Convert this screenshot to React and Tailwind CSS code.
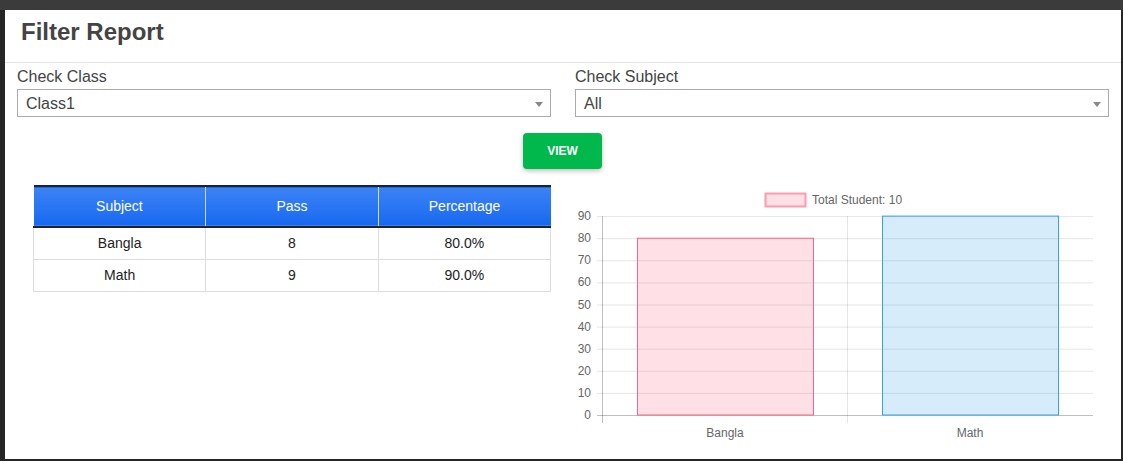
import React from 'react'

const rows = [
  { subject: 'Bangla', pass: 8, pct: '80.0%' },
  { subject: 'Math', pass: 9, pct: '90.0%' },
]

const ticks = [90, 80, 70, 60, 50, 40, 30, 20, 10, 0]
const yOf = v => 230 - v * 2.21

const Select = ({ value }) => (
  <div className="relative h-[28px] border border-[#aaa] bg-white flex items-center pl-[8px] pt-[1px]">
    <span className="text-[16px] text-[#444]">{value}</span>
    <span className="absolute right-[7px] top-[12px] w-0 h-0 border-l-[4px] border-r-[4px] border-t-[5px] border-l-transparent border-r-transparent border-t-[#888]" />
  </div>
)

const Chart = () => (
  <svg width="549" height="270" className="block" style={{ fontFamily: '"Liberation Sans", Arial, sans-serif' }}>
    <rect x="205.5" y="8.5" width="40" height="13" fill="rgba(255,99,132,0.2)" stroke="rgba(255,99,132,0.6)" strokeWidth="2" />
    <text x="252" y="19" fontSize="12" fill="#666">Total Student: 10</text>
    {ticks.map(t => (
      <g key={t}>
        <line x1="37" x2="533" y1={yOf(t) + 0.5} y2={yOf(t) + 0.5} stroke={t === 0 ? 'rgba(0,0,0,0.25)' : 'rgba(0,0,0,0.1)'} />
        <text x="31" y={yOf(t) + 4} fontSize="12" fill="#666" textAnchor="end">{t}</text>
      </g>
    ))}
    <line x1="42.5" x2="42.5" y1={yOf(90)} y2="238" stroke="rgba(0,0,0,0.25)" />
    <line x1="287.5" x2="287.5" y1={yOf(90)} y2="238" stroke="rgba(0,0,0,0.1)" />
    <rect x="77.5" y={yOf(80)} width="176" height={80 * 2.21} fill="rgba(255,99,132,0.2)" stroke="rgb(255,99,132)" strokeWidth="1" />
    <rect x="322.5" y={yOf(90)} width="176" height={90 * 2.21} fill="rgba(54,162,235,0.2)" stroke="rgb(54,162,235)" strokeWidth="1" />
    <text x="165" y="252" fontSize="12" fill="#666" textAnchor="middle">Bangla</text>
    <text x="410" y="252" fontSize="12" fill="#666" textAnchor="middle">Math</text>
  </svg>
)

const App = () => {
  return (
    <div className="w-[1123px] h-[461px] bg-[#262626] flex flex-col font-['Liberation_Sans',Arial,sans-serif]">
      <div className="h-[10px] bg-[#3b3b3b]" />
      <div className="flex-1 pl-[5px] pr-[2px] pb-[2px] flex">
        <div className="flex-1 bg-white flex flex-col">
          <div className="h-[53px] border-b border-[#e3e3e3] pl-[16px] pt-[8px]">
            <h1 className="text-[24px] leading-[28px] font-bold text-[#444]">Filter Report</h1>
          </div>

          <div className="flex gap-[24px] pl-[12px] pr-[12px] pt-[4px]">
            <div className="flex-1">
              <label className="block text-[16px] leading-[20px] text-[#444] mb-[2px]">Check Class</label>
              <Select value="Class1" />
            </div>
            <div className="flex-1">
              <label className="block text-[16px] leading-[20px] text-[#444] mb-[2px]">Check Subject</label>
              <Select value="All" />
            </div>
          </div>

          <div className="flex justify-center mt-[16px] pr-[1px]">
            <button className="w-[79px] h-[36px] rounded-[4px] bg-[#00b84c] text-white text-[12px] font-semibold shadow-[0_2px_5px_rgba(0,0,0,0.25)]">
              VIEW
            </button>
          </div>

          <div className="flex mt-[16px] pl-[12px]">
            <div className="w-[534px] pl-[16px]">
              <table className="w-[518px] border-collapse text-[14px] table-fixed">
                <thead>
                  <tr className="bg-gradient-to-b from-[#3b82f6] to-[#1769f0] border-t-2 border-b-2 border-[#222]">
                    <th className="h-[41px] font-normal text-white border-r border-[#c9dcfb]">Subject</th>
                    <th className="h-[41px] font-normal text-white border-r border-[#c9dcfb]">Pass</th>
                    <th className="h-[41px] font-normal text-white">Percentage</th>
                  </tr>
                </thead>
                <tbody>
                  {rows.map(r => (
                    <tr key={r.subject}>
                      <td className="h-[32px] text-center text-[#222] border border-[#ddd]">{r.subject}</td>
                      <td className="h-[32px] text-center text-[#222] border border-[#ddd]">{r.pass}</td>
                      <td className="h-[32px] text-center text-[#222] border border-[#ddd]">{r.pct}</td>
                    </tr>
                  ))}
                </tbody>
              </table>
            </div>
            <div className="ml-[9px]">
              <Chart />
            </div>
          </div>
        </div>
      </div>
    </div>
  )
}

export default App
